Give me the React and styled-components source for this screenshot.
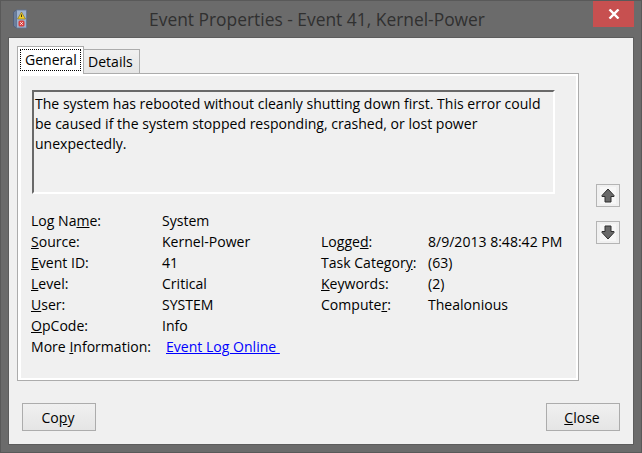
import React from 'react'
import styled, { createGlobalStyle } from 'styled-components'

const GlobalStyle = createGlobalStyle`
  html, body { margin: 0; padding: 0; background: #6b6b6b; }
  * { box-sizing: border-box; }
`

const FONT = `"Open Sans", "Noto Sans", "Liberation Sans", sans-serif`

const Win = styled.div`
  width: 642px;
  height: 453px;
  background: #6b6b6b;
  border: 1px solid #595959;
  font-family: ${FONT};
  font-size: 14.05px;
  color: #000;
  display: flex;
  flex-direction: column;
  overflow: hidden;
`

const TitleBar = styled.div`
  height: 37px;
  flex: none;
  display: grid;
  grid-template-columns: 40px 1fr 41px;
  padding-right: 7px;
`

const AppIcon = styled.svg`
  width: 15px;
  height: 20px;
  margin: 8px 0 0 12px;
`

const Title = styled.div`
  text-align: center;
  font-size: 17.4px;
  line-height: 36px;
  color: #303030;
`

const CloseX = styled.div`
  width: 41px;
  height: 26px;
  background: #c75050;
  display: flex;
  align-items: center;
  justify-content: center;
`

const Client = styled.div`
  flex: 1;
  margin: 0 8px 8px;
  background: #f0f0f0;
  box-shadow: 0 0 0 1px #5c5c5c;
  padding: 8px 8px 0;
`

const Main = styled.div`
  display: flex;
`

const Left = styled.div`
  width: 562px;
`

const Tabs = styled.div`
  display: flex;
  align-items: flex-end;
  height: 27px;
`

const Tab = styled.div`
  border: 1px solid #acacac;
  border-bottom: none;
  background: ${p => (p.$active ? '#fff' : 'linear-gradient(#f0f0f0, #e5e5e5)')};
  width: ${p => (p.$active ? '67px' : '57px')};
  height: ${p => (p.$active ? '28px' : '24px')};
  margin-bottom: ${p => (p.$active ? '-1px' : '0')};
  padding: ${p => (p.$active ? '2px 2px 2px 2px' : '0 0 0 4px')};
  position: relative;
  z-index: ${p => (p.$active ? 1 : 0)};
  line-height: 24px;
  margin-left: ${p => (p.$active ? '0' : '-1px')};
`

const TabFocus = styled.div`
  border: 1px dotted #000;
  height: 22px;
  line-height: 20px;
  padding: 0 0 0 4px;
`

const Page = styled.div`
  height: 308px;
  border: 1px solid #acacac;
`

const PageInner = styled.div`
  height: 100%;
  border-style: solid;
  border-color: #fff;
  border-width: 2px 2px 2px 3px;
  padding: 14px 21px 0 11px;
`

const Message = styled.div`
  height: 104px;
  border-style: solid;
  border-width: 2px;
  border-color: #696969 #fff #fff #696969;
  padding: 2px 0 0 1px;
  line-height: 20px;
`

const Fields = styled.div`
  display: grid;
  grid-template-columns: 131px 159px 107px auto;
  grid-auto-rows: 21px;
  line-height: 21px;
  margin: 16px 0 0 -1px;
  white-space: nowrap;
`

const MoreRow = styled.div`
  display: flex;
  height: 21px;
  line-height: 21px;
  margin-left: -1px;
`

const MoreLabel = styled.span`
  width: 135px;
`

const Link = styled.a`
  color: #0000ff;
  text-decoration: underline;
  cursor: pointer;
  white-space: pre;
`

const Side = styled.div`
  width: 41px;
  padding: 138px 0 0 17px;
  display: flex;
  flex-direction: column;
  gap: 14px;
`

const ArrowBtn = styled.div`
  width: 24px;
  height: 23px;
  border: 1px solid #b4b4b4;
  background: #f0f0f0;
  display: flex;
  align-items: center;
  justify-content: center;
`

const ArrowFace = styled.svg`
  width: 16px;
  height: 17px;
  background: #f7f7f7;
`

const Footer = styled.div`
  display: flex;
  justify-content: space-between;
  padding: 22px 5px 0 5px;
  width: 608px;
`

const Button = styled.div`
  width: 74px;
  height: 28px;
  border: 1px solid #acacac;
  background: linear-gradient(#f0f0f0, #e5e5e5);
  text-align: center;
  line-height: 28px;
  padding-right: ${p => p.$nudge || 0}px;
`

const fields = [
  [<>Log Na<u>m</u>e:</>, 'System', '', ''],
  [<><u>S</u>ource:</>, 'Kernel-Power', <>Logge<u>d</u>:</>, '8/9/2013 8:48:42 PM'],
  [<><u>E</u>vent ID:</>, '41', <>Task Categor<u>y</u>:</>, '(63)'],
  [<><u>L</u>evel:</>, 'Critical', <><u>K</u>eywords:</>, '(2)'],
  [<><u>U</u>ser:</>, 'SYSTEM', <>Compute<u>r</u>:</>, 'Thealonious'],
  [<><u>O</u>pCode:</>, 'Info', '', ''],
]

const App = () => {
  return (
    <Win>
      <GlobalStyle />
      <TitleBar>
        <AppIcon viewBox="0 0 15 20">
          <path d="M0.5 3 L3.5 1 V19 L0.5 17 Z" fill="#6d7f9c" stroke="#4d5c78" strokeWidth="0.8" />
          <path d="M3.5 1 H13.5 V19 H3.5 Z" fill="#9fb2cd" stroke="#5f7396" strokeWidth="0.8" />
          <path d="M8.5 3 L12.5 10 H4.5 Z" fill="#f0cc28" stroke="#7d6c18" strokeWidth="0.6" />
          <path d="M8.5 5.5 V8" stroke="#3a3210" strokeWidth="1" />
          <rect x="5.5" y="11.5" width="6" height="6" rx="1.5" fill="#d9403e" />
          <path d="M7.3 13.3 L9.7 15.7 M9.7 13.3 L7.3 15.7" stroke="#fff" strokeWidth="1" />
        </AppIcon>
        <Title>Event Properties - Event 41, Kernel-Power</Title>
        <CloseX>
          <svg width="12" height="10" viewBox="0 0 12 10">
            <path d="M1.5 0.5 L10.5 9.5 M10.5 0.5 L1.5 9.5" stroke="#fff" strokeWidth="2.4" />
          </svg>
        </CloseX>
      </TitleBar>
      <Client>
        <Main>
          <Left>
            <Tabs>
              <Tab $active><TabFocus>General</TabFocus></Tab>
              <Tab>Details</Tab>
            </Tabs>
            <Page>
              <PageInner>
                <Message>
                  The system has rebooted without cleanly shutting down first. This error could be caused if the system stopped responding, crashed, or lost power unexpectedly.
                </Message>
                <Fields>
                  {fields.map((row, i) => row.map((cell, j) => <div key={`${i}-${j}`}>{cell}</div>))}
                </Fields>
                <MoreRow>
                  <MoreLabel>More <u>I</u>nformation:</MoreLabel>
                  <Link>Event Log Online </Link>
                </MoreRow>
              </PageInner>
            </Page>
          </Left>
          <Side>
            <ArrowBtn>
              <ArrowFace viewBox="0 0 16 17">
                <path d="M8 2 L14 8.5 V9.5 H11 V15 H5 V9.5 H2 V8.5 Z" fill="#6a6a6a" stroke="#2e2e2e" strokeWidth="1" />
              </ArrowFace>
            </ArrowBtn>
            <ArrowBtn>
              <ArrowFace viewBox="0 0 16 17">
                <path d="M8 15 L14 8.5 V7.5 H11 V2 H5 V7.5 H2 V8.5 Z" fill="#6a6a6a" stroke="#2e2e2e" strokeWidth="1" />
              </ArrowFace>
            </ArrowBtn>
          </Side>
        </Main>
        <Footer>
          <Button $nudge={2}>Co<u>p</u>y</Button>
          <Button $nudge={2}><u>C</u>lose</Button>
        </Footer>
      </Client>
    </Win>
  )
}

export default App
